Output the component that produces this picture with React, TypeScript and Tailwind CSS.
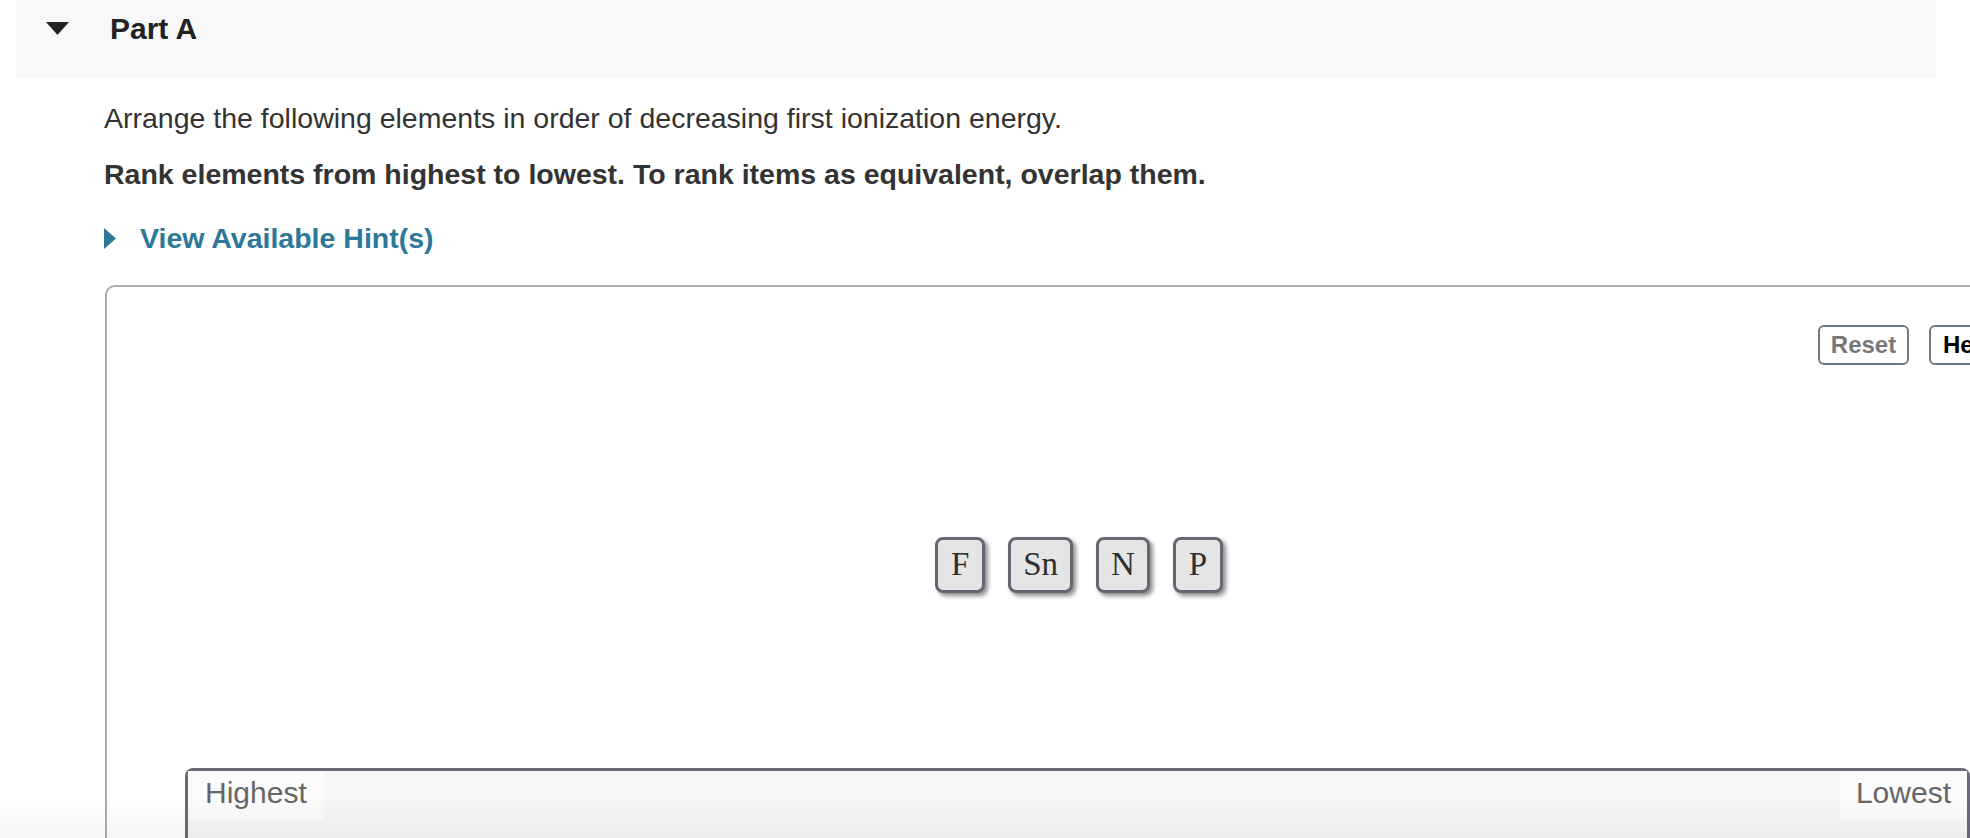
import React from "react";

const sans = { fontFamily: '"Liberation Sans", Arial, Helvetica, sans-serif' };

function Chip({ label }: { label: string }) {
  return (
    <div
      className="h-[56px] px-[12px] min-w-[50px] flex items-center justify-center rounded-[8px] border-[3px] border-[#676774] bg-[#e5e5e5] text-[#2f2f2f] text-[33px] shadow-[3px_3px_4px_rgba(0,0,0,0.45)]"
      style={{ fontFamily: '"Liberation Serif", "Times New Roman", serif' }}
    >
      {label}
    </div>
  );
}

export default function App() {
  const elements = ["F", "Sn", "N", "P"];

  return (
    <div className="relative w-[1970px] h-[838px] overflow-hidden bg-white" style={sans}>
      {/* Part header */}
      <div className="ml-[16px] w-[1920px] h-[78px] bg-[#f8f8f8] flex items-start">
        <svg width="23" height="13" viewBox="0 0 23 13" className="ml-[30px] mt-[22px]">
          <path d="M0 0 L23 0 L11.5 13 Z" fill="#222" />
        </svg>
        <h2 className="ml-[41px] mt-[12px] text-[30px] leading-[34px] font-bold text-[#222]">Part A</h2>
      </div>

      <div className="pl-[104px]">
        <p className="mt-[23px] text-[28.5px] leading-[34px] text-[#333]">
          Arrange the following elements in order of decreasing first ionization energy.
        </p>
        <p className="mt-[22px] text-[28.5px] leading-[34px] font-bold text-[#333]">
          Rank elements from highest to lowest. To rank items as equivalent, overlap them.
        </p>

        {/* Hints */}
        <div className="mt-[30px] flex items-center h-[34px]">
          <svg width="12" height="21" viewBox="0 0 12 21">
            <path d="M0 0 L12 10.5 L0 21 Z" fill="#2d7898" />
          </svg>
          <span className="ml-[24px] text-[28.5px] leading-[34px] font-bold text-[#2d7898]">
            View Available Hint(s)
          </span>
        </div>

        {/* Ranking widget */}
        <div className="mt-[30px] ml-[1px] w-[1948px] h-[700px] border-2 border-[#ababab] rounded-[10px]">
          <div className="flex justify-end gap-[20px] pt-[38px] pr-[42px]">
            <button className="h-[40px] w-[91px] rounded-[6px] border-2 border-[#6f7a82] text-[24px] leading-none font-bold text-[#777]">
              Reset
            </button>
            <button className="h-[40px] w-[80px] rounded-[6px] border-2 border-[#6f7a82] text-[24px] leading-none font-bold text-black">
              Help
            </button>
          </div>

          <div className="mt-[172px] flex justify-center gap-[23px]">
            {elements.map((e) => (
              <Chip key={e} label={e} />
            ))}
          </div>

          <div className="mt-[175px] ml-[78px] w-[1785px] h-[200px] rounded-[8px] border-[3px] border-[#6a6a78] bg-[#f6f6f6] flex justify-between items-start">
            <div className="h-[49px] px-[17px] bg-[#fbfbfb] text-[30px] leading-[44px] text-[#666]">Highest</div>
            <div className="h-[49px] px-[16px] bg-[#fbfbfb] text-[30px] leading-[44px] text-[#666]">Lowest</div>
          </div>
        </div>
      </div>

      {/* bottom fade overlay */}
      <div className="absolute left-0 right-0 bottom-0 h-[40px] bg-gradient-to-b from-transparent to-black/[0.04]" />
    </div>
  );
}
